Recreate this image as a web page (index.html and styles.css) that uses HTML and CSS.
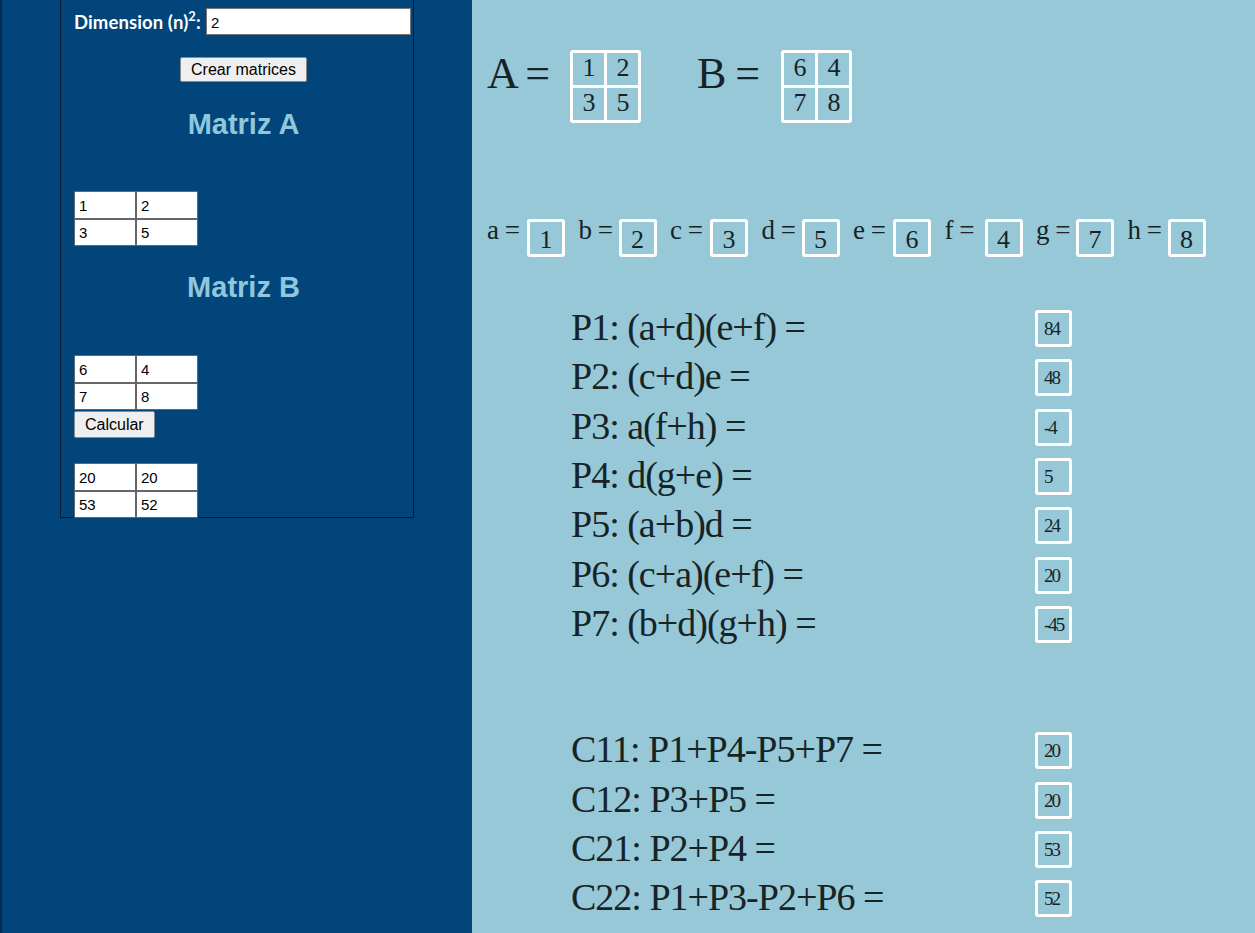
FILE: index.html
```html
<!DOCTYPE html>
<html lang="es">
<head>
<meta charset="utf-8">
<title>Strassen</title>
<link rel="stylesheet" href="styles.css">
</head>
<body>
<div class="page">
  <div class="left">
    <div class="panel">
      <div class="dim-row">
        <label class="dim-label">Dimension (n)<sup>2</sup>:</label>
        <input class="dim-input" type="text" value="2">
      </div>
      <div class="center"><button class="btn">Crear matrices</button></div>
      <h2 class="title title-a">Matriz A</h2>
      <div class="grid">
        <input class="cell" value="1"><input class="cell" value="2">
        <input class="cell" value="3"><input class="cell" value="5">
      </div>
      <h2 class="title title-b">Matriz B</h2>
      <div class="grid">
        <input class="cell" value="6"><input class="cell" value="4">
        <input class="cell" value="7"><input class="cell" value="8">
      </div>
      <button class="btn btn-calc">Calcular</button>
      <div class="grid grid-res">
        <input class="cell" value="20"><input class="cell" value="20">
        <input class="cell" value="53"><input class="cell" value="52">
      </div>
    </div>
  </div>
  <div class="right">
    <div class="mat-row">
      <span class="mat-label">A =</span>
      <div class="mat"><span>1</span><span>2</span><span>3</span><span>5</span></div>
      <span class="mat-label mat-label-b">B =</span>
      <div class="mat"><span>6</span><span>4</span><span>7</span><span>8</span></div>
    </div>
    <div class="vars">
      <div class="var"><span class="var-label">a =</span><span class="var-box">1</span></div>
      <div class="var"><span class="var-label">b =</span><span class="var-box">2</span></div>
      <div class="var"><span class="var-label">c =</span><span class="var-box">3</span></div>
      <div class="var"><span class="var-label">d =</span><span class="var-box">5</span></div>
      <div class="var"><span class="var-label">e =</span><span class="var-box">6</span></div>
      <div class="var"><span class="var-label">f =</span><span class="var-box">4</span></div>
      <div class="var"><span class="var-label">g =</span><span class="var-box">7</span></div>
      <div class="var"><span class="var-label">h =</span><span class="var-box">8</span></div>
    </div>
    <div class="eqs">
      <div class="eq"><span class="eq-text">P1: (a+d)(e+f) =</span><span class="res">84</span></div>
      <div class="eq"><span class="eq-text">P2: (c+d)e =</span><span class="res">48</span></div>
      <div class="eq"><span class="eq-text">P3: a(f+h) =</span><span class="res">-4</span></div>
      <div class="eq"><span class="eq-text">P4: d(g+e) =</span><span class="res">5</span></div>
      <div class="eq"><span class="eq-text">P5: (a+b)d =</span><span class="res">24</span></div>
      <div class="eq"><span class="eq-text">P6: (c+a)(e+f) =</span><span class="res">20</span></div>
      <div class="eq"><span class="eq-text">P7: (b+d)(g+h) =</span><span class="res">-45</span></div>
    </div>
    <div class="eqs eqs-c">
      <div class="eq"><span class="eq-text">C11: P1+P4-P5+P7 =</span><span class="res">20</span></div>
      <div class="eq"><span class="eq-text">C12: P3+P5 =</span><span class="res">20</span></div>
      <div class="eq"><span class="eq-text">C21: P2+P4 =</span><span class="res">53</span></div>
      <div class="eq"><span class="eq-text">C22: P1+P3-P2+P6 =</span><span class="res">52</span></div>
    </div>
  </div>
</div>
</body>
</html>
```

FILE: styles.css
```css
html, body {
  margin: 0;
  padding: 0;
}
body {
  font-family: "Liberation Sans", Arial, sans-serif;
  overflow: hidden;
}
.page {
  display: flex;
  height: 933px;
}
.left {
  width: 470px;
  flex: none;
  background: #01457a;
  border-left: 2px solid #022a55;
}
.panel {
  box-sizing: border-box;
  width: 354px;
  margin-left: 58px;
  padding: 8px 0 0 13px;
  border: 1px solid #0b1a2c;
  border-top: none;
  height: 518px;
}
.dim-row {
  display: flex;
  align-items: center;
  height: 27px;
}
.dim-label {
  width: 132px;
  flex: none;
  font-family: Lato, "Open Sans", sans-serif;
  font-weight: 700;
  font-size: 18.5px;
  color: #ffffff;
  letter-spacing: 0.1px;
  white-space: nowrap;
}
.dim-label sup {
  font-size: 13px;
  line-height: 0;
  vertical-align: 8px;
}
.dim-input {
  box-sizing: border-box;
  width: 205px;
  height: 27px;
  border: 1px solid #767676;
  padding: 1px 4px 0;
  font-family: "Liberation Sans", Arial, sans-serif;
  font-size: 15px;
  color: #000;
  background: #fff;
  margin: 0;
}
.center {
  display: flex;
  justify-content: center;
  margin-top: 22px;
}
.btn {
  font-family: "Liberation Sans", Arial, sans-serif;
  font-size: 16px;
  height: 25px;
  padding: 0 10px;
  background: #efefef;
  border: 1px solid #8a8a8a;
  border-radius: 2px;
  color: #000;
  margin: 0;
  line-height: 21px;
}
.title {
  font-family: "Liberation Sans", Arial, sans-serif;
  font-weight: 700;
  font-size: 29px;
  line-height: 33px;
  color: #90c7dc;
  text-align: center;
  margin: 0;
}
.title-a {
  margin-top: 26px;
  margin-bottom: 50px;
}
.title-b {
  margin-top: 25px;
  margin-bottom: 51px;
}
.grid {
  display: grid;
  grid-template-columns: 62px 62px;
  grid-auto-rows: 27.5px;
}
.cell {
  box-sizing: border-box;
  width: 62px;
  height: 27.5px;
  margin: 0;
  border: 1px solid #666;
  padding: 1px 4px 0;
  font-family: "Liberation Sans", Arial, sans-serif;
  font-size: 15px;
  color: #000;
  background: #fff;
}
.btn-calc {
  display: block;
  height: 27px;
  margin-top: 1px;
  padding: 0 10px;
}
.grid-res {
  margin-top: 25px;
}

.right {
  flex: 1;
  background: #96c8d8;
  padding: 50px 0 0 15px;
  font-family: "Liberation Serif", "Times New Roman", serif;
  color: #162426;
}
.mat-row {
  display: flex;
  align-items: flex-start;
}
.mat-label {
  font-size: 44px;
  line-height: 44px;
  letter-spacing: -1px;
  margin-top: 2px;
  width: 83px;
  white-space: nowrap;
}
.mat-label-b {
  margin-left: 56px;
  width: 84px;
}
.mat {
  display: grid;
  grid-template-columns: 31px 31px;
  grid-template-rows: 32px 32px;
  gap: 3px;
  padding: 3px;
  background: #fff;
  border-radius: 3px;
}
.mat span {
  background: #96c8d8;
  font-size: 26px;
  line-height: 30px;
  text-align: center;
  letter-spacing: -1px;
}
.vars {
  display: flex;
  gap: 13.5px;
  margin-top: 96px;
}
.var {
  display: flex;
  align-items: flex-start;
}
.var-label {
  width: 40px;
  font-size: 27px;
  line-height: 27px;
  margin-top: -2px;
  white-space: nowrap;
  letter-spacing: -0.5px;
}
.var-box {
  box-sizing: border-box;
  width: 38px;
  height: 38px;
  border: 3px solid #fff;
  border-radius: 3px;
  font-size: 26px;
  line-height: 36px;
  text-align: center;
  overflow: visible;
}
.eqs {
  margin-top: 47px;
  padding-left: 84px;
}
.eqs-c {
  margin-top: 77px;
}
.eq {
  display: flex;
  align-items: center;
  height: 49.33px;
}
.eq-text {
  width: 464px;
  font-size: 38px;
  line-height: 38px;
  letter-spacing: -1px;
  white-space: nowrap;
  margin-top: -3px;
}
.res {
  box-sizing: border-box;
  width: 37px;
  height: 37px;
  border: 3px solid #fff;
  border-radius: 3px;
  font-size: 19px;
  line-height: 31px;
  letter-spacing: -2px;
  padding-left: 6px;
}
```
